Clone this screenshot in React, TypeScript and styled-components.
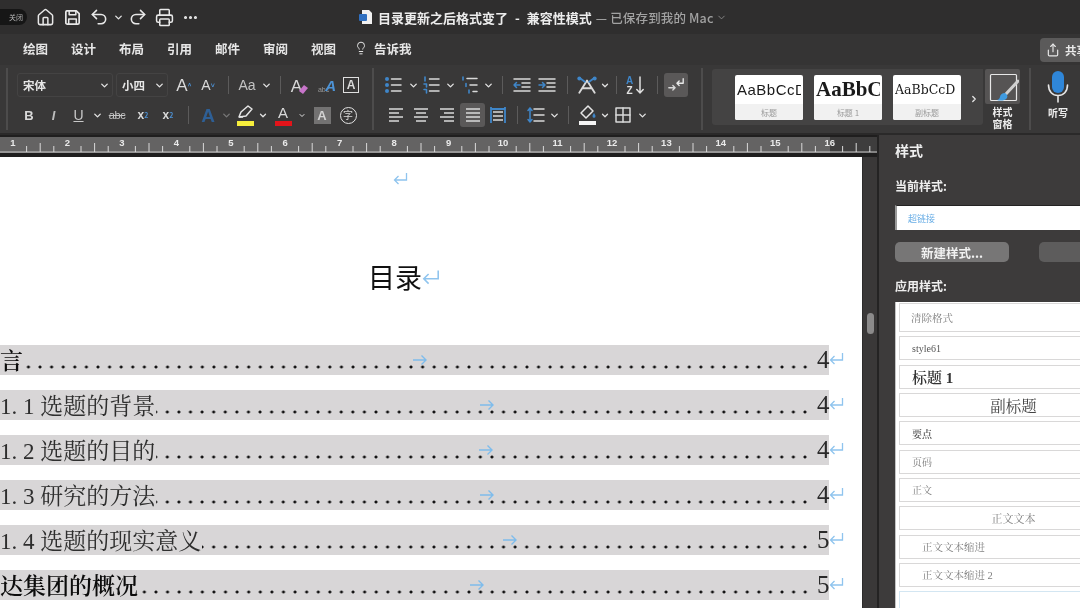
import React from "react";
import styled, { createGlobalStyle } from "styled-components";
import { House, Undo2, Redo2, Printer, Ellipsis, ChevronDown, ChevronRight, Lightbulb, Share } from "lucide-react";

const UI = `"Noto Sans CJK SC","Liberation Sans",sans-serif`;
const SERIF = `"Liberation Serif","Noto Serif CJK SC","Noto Sans CJK SC",serif`;

const Global = createGlobalStyle`
  html, body { margin: 0; padding: 0; background: #383737; overflow: hidden; }
  #root { width: 1080px; height: 608px; overflow: hidden; }
  * { box-sizing: border-box; }
`;

const Screen = styled.div`
  width: 1080px; height: 608px; display: flex; flex-direction: column; overflow: hidden;
  font-family: ${UI}; color: #e4e4e4; background: #383737; filter: blur(0.45px);
`;

/* ---------- title bar ---------- */
const TitleBar = styled.header`
  height: 34px; flex: none; display: flex; align-items: center; background: #2f2e2e; position: relative;
`;
const CloseChip = styled.div`
  width: 27px; height: 16px; margin-right: 8px; border-radius: 0 8px 8px 0; background: #161616; color: #b5b5b5;
  font-size: 7px; display: flex; align-items: center; justify-content: flex-end; padding-right: 4px; flex: none;
`;
const QuickCell = styled.div<{ $w: number }>`
  width: ${p => p.$w}px; flex: none; display: flex; justify-content: center; align-items: center; color: #e8e8e8;
`;
const DocTitle = styled.div`
  position: absolute; left: 358px; top: 0; height: 34px; display: flex; align-items: center; white-space: nowrap;
  font-size: 13px; font-weight: 700; color: #ececec;
`;
const SavedText = styled.span`
  color: #a2a2a2; font-weight: 500; margin: 0 2px 0 4px; font-size: 12.5px; letter-spacing: 0.15px;
`;
const Sep = styled.span`
  margin: 0 7px;
`;

/* ---------- tabs ---------- */
const TabBar = styled.nav`
  height: 31px; flex: none; display: flex; align-items: center; background: #353434; padding: 0 0 3px 23px;
`;
const Tab = styled.span`
  width: 48px; flex: none; font-size: 12.5px; font-weight: 700; color: #e6e6e6;
`;
const TellMe = styled.div`
  display: flex; align-items: center; gap: 6px; font-size: 12.5px; font-weight: 700; color: #e6e6e6; margin-left: -5px;
`;
const ShareButton = styled.div`
  margin-left: auto; width: 40px; height: 24px; margin-top: 3px; border-radius: 4px 0 0 4px; background: #5b5a5a; color: #e8e8e8;
  display: flex; align-items: center; gap: 5px; padding-left: 6px; font-size: 11.5px; font-weight: 700; overflow: hidden; white-space: nowrap;
  svg { flex: none; }
`;

/* ---------- ribbon ---------- */
const Ribbon = styled.section`
  height: 70px; flex: none; display: flex; align-items: flex-start; background: #393838; padding-left: 6px; border-bottom: 2px solid #2a2929;
`;
const GroupRule = styled.div<{ $l: number }>`
  width: 2px; height: 62px; margin: 3px 0 0 ${p => p.$l}px; background: #4d4c4c; flex: none;
`;
const ToolGroup = styled.div<{ $l: number; $w: number }>`
  width: ${p => p.$w}px; margin: 8px 0 0 ${p => p.$l}px; display: flex; flex-direction: column; gap: 6px; flex: none;
`;
const ToolRow = styled.div`
  height: 24px; display: flex; align-items: center;
`;
const Select = styled.div<{ $w: number; $mr?: number }>`
  width: ${p => p.$w}px; height: 24px; margin-right: ${p => p.$mr ?? 0}px; flex: none; border: 1px solid #444343; border-radius: 3px;
  display: flex; align-items: center; justify-content: space-between; padding: 0 2px 0 5px; font-size: 11.5px; font-weight: 700; color: #e6e6e6;
`;
const Cell = styled.div<{ $w: number; $on?: boolean; $tone?: string }>`
  width: ${p => p.$w}px; height: 24px; flex: none; display: flex; align-items: center; justify-content: center; position: relative;
  color: ${p => p.$tone ?? "#d9d9d9"}; border-radius: 3px; background: ${p => (p.$on ? "#5a5858" : "transparent")};
`;
const Divider = styled.div<{ $w: number }>`
  width: ${p => p.$w}px; height: 18px; flex: none; display: flex; justify-content: center;
  &::after { content: ""; width: 1px; height: 100%; background: #5c5b5b; }
`;
const Letter = styled.span<{ $s?: number; $b?: boolean; $i?: boolean; $u?: boolean; $c?: string; $f?: string }>`
  font-family: ${p => p.$f ?? `"Liberation Sans",sans-serif`}; font-size: ${p => p.$s ?? 14}px; line-height: 1;
  font-weight: ${p => (p.$b ? 700 : 400)}; font-style: ${p => (p.$i ? "italic" : "normal")};
  text-decoration: ${p => (p.$u ? "underline" : "none")}; color: ${p => p.$c ?? "inherit"};
`;
const TinyMark = styled.sub<{ $up?: boolean }>`
  font-size: 7px; color: #4d8fd0; font-weight: 700; vertical-align: ${p => (p.$up ? "super" : "sub")}; line-height: 0;
`;
const ColorBar = styled.span<{ $c: string }>`
  position: absolute; left: 50%; bottom: 1px; width: 17px; height: 5px; margin-left: -8.5px; background: ${p => p.$c};
`;
const GrayTile = styled.span`
  width: 17px; height: 17px; background: #737272; color: #d2d2d2; display: flex; align-items: center; justify-content: center;
  font-family: "Liberation Sans",sans-serif; font-size: 13px; font-weight: 700;
`;
const CharCircle = styled.span`
  width: 17px; height: 17px; border-radius: 50%; border: 1.5px solid #e4e4e4; display: flex; align-items: center; justify-content: center; font-size: 10px; line-height: 1;
`;
const BoxedA = styled.span`
  width: 16px; height: 16px; border: 1.5px solid #e0e0e0; display: flex; align-items: center; justify-content: center;
  font-family: "Liberation Sans",sans-serif; font-size: 12px; font-weight: 700;
`;
const Struck = styled.span`
  font-family: "Liberation Sans",sans-serif; font-size: 11px; text-decoration: line-through; letter-spacing: -0.4px; color: #c4c4c4;
`;

const Gallery = styled.div`
  width: 271px; height: 56px; margin: 4px 0 0 9px; flex: none; background: #444343; border-radius: 3px 0 3px 3px;
  display: flex; align-items: flex-start; padding: 6px 0 0 23px; gap: 11px; position: relative;
`;
const StyleCard = styled.div`
  width: 68px; height: 45px; flex: none; background: #fff; border-radius: 2px; display: flex; flex-direction: column; overflow: hidden;
`;
const CardSample = styled.div<{ $f: string; $s: number; $b?: boolean; $ls?: number }>`
  height: 29px; margin: 0 2px; display: flex; align-items: center; overflow: hidden; white-space: nowrap;
  font-family: ${p => p.$f}; font-size: ${p => p.$s}px; font-weight: ${p => (p.$b ? 700 : 400)}; color: #1a1a1a; letter-spacing: ${p => p.$ls ?? 0}px;
`;
const CardLabel = styled.div`
  flex: 1; background: #f1f1f1; color: #9a9a9a; font-size: 8px; display: flex; align-items: center; justify-content: center;
`;
const GalleryNext = styled.div`
  position: absolute; left: 257px; top: 16px; color: #e6e6e6;
`;
const PaneButton = styled.div`
  width: 35px; margin: 4px 0 0 2px; flex: none; display: flex; flex-direction: column; align-items: center;
`;
const PaneIcon = styled.div`
  width: 35px; height: 35px; background: #565454; border-radius: 2px; display: flex; align-items: center; justify-content: center;
`;
const RibbonCaption = styled.div`
  font-size: 10px; line-height: 12px; font-weight: 700; text-align: center; color: #ececec; margin-top: 2px;
`;
const Dictate = styled.div`
  width: 36px; margin: 5px 0 0 9px; flex: none; display: flex; flex-direction: column; align-items: center; gap: 2px;
`;

/* ---------- body ---------- */
const Body = styled.main`
  flex: 1; display: flex; min-height: 0;
`;
const Left = styled.div`
  width: 877px; flex: none; display: flex; flex-direction: column;
`;
const RulerBar = styled.div`
  height: 22px; flex: none; background: #1f1e1e; line-height: 0;
`;
const Workspace = styled.div`
  flex: 1; display: flex; min-height: 0;
`;
const Page = styled.div`
  width: 862px; flex: none; background: #fff; display: flex; flex-direction: column; align-items: center; padding-top: 13px; overflow: hidden;
`;
const Gutter = styled.div`
  flex: 1; background: #3a3838; display: flex; flex-direction: column; align-items: center; padding-top: 156px; border-left: 1px solid #2c2b2b;
`;
const Thumb = styled.div`
  width: 7px; height: 21px; border-radius: 3.5px; background: #8b8a8a;
`;
const TopMark = styled.div`
  height: 16px; margin-right: 62px; display: flex; align-items: center;
`;
const PageTitle = styled.h1`
  margin: 76px 54px 0 0; height: 30px; display: flex; align-items: center; font-family: "Noto Sans CJK SC",sans-serif; font-weight: 400; font-size: 27px; line-height: 30px; color: #111;
`;
const Toc = styled.div`
  width: 862px; margin-top: 53px; display: flex; flex-direction: column; gap: 15px;
`;
const TocRow = styled.div<{ $b?: boolean }>`
  width: 829px; height: 30px; flex: none; background: #d8d6d7; position: relative; display: flex; align-items: stretch; white-space: pre;
  font-family: ${SERIF}; font-size: 23px; line-height: 33px; color: ${p => (p.$b ? "#0c0c0c" : "#2e2e2e")}; font-weight: ${p => (p.$b ? 600 : 400)};
`;
const Leader = styled.span`
  flex: 1; margin: 0 6px 0 1px;
  background-image: radial-gradient(circle at 5.8px 22px, #111 1.2px, transparent 1.8px);
  background-size: 11.6px 30px; background-position: right top; background-repeat: repeat-x;
`;
const PageNo = styled.span`
  font-family: "Liberation Serif",serif; font-size: 25px; line-height: 30px; width: 12px; font-weight: 400; color: #2a2a2a;
`;
const RowArrow = styled.span<{ $x: number }>`
  position: absolute; left: ${p => p.$x}px; top: 8px; line-height: 0;
`;
const RowReturn = styled.span`
  position: absolute; left: 100%; top: 6px; line-height: 0;
`;

/* ---------- styles panel ---------- */
const Panel = styled.aside`
  flex: 1; min-width: 0; background: #3d3b3b; border-left: 2px solid #242323; padding: 5px 0 0 16px; overflow: hidden;
`;
const PanelTitle = styled.div`
  font-size: 14px; line-height: 20px; font-weight: 700; color: #eee;
`;
const PanelLabel = styled.div<{ $t: number }>`
  font-size: 12px; line-height: 16px; font-weight: 700; color: #eee; margin-top: ${p => p.$t}px;
`;
const CurrentStyle = styled.div`
  width: 240px; height: 25px; margin-top: 11px; background: #fff; border-left: 2px solid #9a9a9a; border-top: 1px solid #242323;
  display: flex; align-items: center; padding-left: 11px; font-size: 9px; color: #6aaee6;
`;
const PanelButtons = styled.div`
  display: flex; gap: 30px; margin-top: 12px;
`;
const PanelButton = styled.div<{ $w: number; $dim?: boolean }>`
  width: ${p => p.$w}px; height: 20px; flex: none; border-radius: 5px; background: ${p => (p.$dim ? "#5d5c5c" : "#777676")};
  display: flex; align-items: center; justify-content: center; font-size: 12.5px; font-weight: 700; color: #f0f0f0;
`;
const StyleList = styled.div`
  width: 260px; margin-top: 8px; background: #fff; padding: 1px 0 0 3px; display: flex; flex-direction: column; gap: 4.33px; height: 320px; border-left: 1px solid #c4c4c4;
`;
const StyleItem = styled.div<{ $h?: number; $pad?: number; $c?: boolean; $s?: number; $col?: string; $b?: boolean; $blue?: boolean }>`
  width: 228px; height: ${p => p.$h ?? 24}px; flex: none; display: flex; align-items: center;
  justify-content: ${p => (p.$c ? "center" : "flex-start")}; padding-left: ${p => (p.$c ? 0 : p.$pad ?? 11)}px;
  border: 1.5px solid ${p => (p.$blue ? "#d3e6f2" : "#d9d8d8")}; border-right: none; background: #fff;
  font-family: ${SERIF}; font-size: ${p => p.$s ?? 10}px; color: ${p => p.$col ?? "#808080"}; font-weight: ${p => (p.$b ? 600 : 400)}; white-space: nowrap;
`;

/* ---------- icons ---------- */
const Ico: React.FC<{ s?: number; children: React.ReactNode }> = ({ s = 20, children }) => (
  <svg width={s} height={s} viewBox="0 0 20 20" fill="none" stroke="currentColor" strokeWidth={1.5} strokeLinecap="round" strokeLinejoin="round">{children}</svg>
);
const Chev: React.FC<{ c?: string }> = ({ c }) => <ChevronDown size={11} strokeWidth={3} color={c ?? "#e2e2e2"} />;
const BLUE = "#3f86c9";

const SaveIcon = () => (
  <Ico s={19}>
    <path d="M4 3h10l3 3v9.500a1.500 1.500 0 0 1-1.500 1.500h-11A1.500 1.500 0 0 1 3 15.500V4.500A1.500 1.500 0 0 1 4 3z" strokeWidth={1.8} />
    <path d="M6.500 3.500v3.500h7V3.500M6 17v-5.500h8V17" strokeWidth={1.6} />
  </Ico>
);
const BulletsIcon = () => (
  <Ico><g fill={BLUE} stroke="none"><circle cx="3" cy="4" r="2" /><circle cx="3" cy="10" r="2" /><circle cx="3" cy="16" r="2" /></g><path d="M7.500 4H17M7.500 10H17M7.500 16H17" /></Ico>
);
const NumbersIcon = () => (
  <Ico><g stroke={BLUE} strokeWidth={1.6}><path d="M3 2v4M2 9h2.500v3M2 14.500h2.500V18" /></g><path d="M7.500 4H17M7.500 10H17M7.500 16H17" /></Ico>
);
const MultiIcon = () => (
  <Ico><g stroke={BLUE} strokeWidth={1.6}><path d="M3 2v3M6 8.500v3M9 15v3" /></g><path d="M7 3.500h10M10 10h7M13 16.500h4" /></Ico>
);
const IndentIcon: React.FC<{ dir: 1 | -1 }> = ({ dir }) => (
  <Ico>
    <path d="M2 4h16M10 8h8M10 12h8M2 16h16" />
    <path d={dir < 0 ? "M8 10H2M4.500 7.500 2 10l2.500 2.500" : "M2 10h6M5.500 7.500 8 10l-2.500 2.500"} stroke={BLUE} />
  </Ico>
);
const AsianIcon = () => (
  <Ico s={22}>
    <path d="M3 17 10 6l7 11M6 13h8" strokeWidth={1.7} />
    <path d="M4 4l4 3M16 4l-4 3" stroke={BLUE} strokeWidth={1.7} />
    <g fill={BLUE} stroke="none"><circle cx="3" cy="4" r="1.800" /><circle cx="17" cy="4" r="1.800" /></g>
  </Ico>
);
const SortIcon = () => (
  <svg width="22" height="22" viewBox="0 0 22 22" fontFamily="Liberation Sans, sans-serif" fontWeight="700" fontSize="10">
    <text x="1" y="10" fill={BLUE}>A</text>
    <text x="1.500" y="20" fill="#e0e0e0">Z</text>
    <path d="M15 3v16M11.800 15.500 15 19l3.200-3.500" fill="none" stroke="#e0e0e0" strokeWidth="1.500" strokeLinecap="round" />
  </svg>
);
const ParaIcon = () => (
  <Ico s={18}>
    <path d="M2 13h7M6.500 10.500 9 13l-2.500 2.500" stroke="#d8d8d8" />
    <path d="M18 3v5h-7M13.500 5.500 11 8l2.500 2.500" stroke="#e8e8e8" />
  </Ico>
);
const AlignIcon: React.FC<{ k: "l" | "c" | "r" | "j" }> = ({ k }) => {
  const m: Record<string, string> = {
    l: "M3 4h14M3 8h10M3 12h14M3 16h10",
    c: "M3 4h14M5 8h10M3 12h14M5 16h10",
    r: "M3 4h14M7 8h10M3 12h14M7 16h10",
    j: "M3 4h14M3 8h14M3 12h14M3 16h14",
  };
  return <Ico><path d={m[k]} strokeLinecap="butt" strokeWidth={1.7} /></Ico>;
};
const DistIcon = () => (
  <Ico>
    <path d="M5 7h10M5 11h10M5 15h10" strokeWidth={1.7} strokeLinecap="butt" />
    <path d="M3 2v16M17 2v16M3 4h14" stroke={BLUE} strokeWidth={1.8} strokeLinecap="butt" />
  </Ico>
);
const LineSpaceIcon = () => (
  <Ico>
    <path d="M8 4h10M8 10h10M8 16h10" />
    <path d="M4 3v14M2 5.500 4 3l2 2.500M2 14.500 4 17l2-2.500" stroke={BLUE} />
  </Ico>
);
const FillIcon = () => (
  <svg width="20" height="22" viewBox="0 0 20 22" fill="none" stroke="#e6e6e6" strokeWidth="1.500" strokeLinejoin="round">
    <path d="M10 2 3 9l5 5 7-7z" />
    <path d="M16 9c1 1.600 1.500 2.400 1.500 3.200a1.500 1.500 0 0 1-3 0c0-.8.500-1.600 1.500-3.200z" fill={BLUE} stroke="none" />
    <rect x="1" y="17" width="17" height="4" fill="#f4f4f4" stroke="none" />
  </svg>
);
const BorderIcon = () => (
  <Ico><rect x="3" y="3" width="14" height="14" /><path d="M10 3v14M3 10h14" /></Ico>
);
const EraseMark = styled.svg`
  margin: 8px 0 0 -4px;
`;
const IconPair = styled.span`
  display: inline-flex; align-items: flex-end; line-height: 1;
`;
const EraseIcon = () => (
  <IconPair>
    <Letter $s={17} $c="#d8d8d8">A</Letter>
    <EraseMark width="11" height="11" viewBox="0 0 11 11">
      <path d="M6 1l4 3-5 6-4-3z" fill="#c774c9" />
    </EraseMark>
  </IconPair>
);
const AbcA = styled(Letter)`
  margin-left: -4px;
`;
const AbcIcon = () => (
  <IconPair>
    <Letter $s={7} $c="#9a9a9a">abc</Letter>
    <AbcA $s={15} $i $b $c="#4d93d6">A</AbcA>
  </IconPair>
);
const StrokeA = styled.span`
  font-family: "Liberation Sans",sans-serif; font-weight: 700; font-size: 19px; line-height: 1; color: #2e5f95;
`;
const RaisedLetter = styled(Letter)`
  margin-top: -5px;
`;
const HighlightSvg = styled.svg`
  margin-top: -6px;
`;
const HighlightIcon = () => (
  <HighlightSvg width="20" height="14" viewBox="0 0 20 14" fill="none" stroke="#e6e6e6" strokeWidth="1.500" strokeLinejoin="round">
    <path d="M4 12 6 7l7-6 4 3-6 7z" /><path d="M4 12h4" />
  </HighlightSvg>
);
const BrushIcon = () => (
  <svg width="33" height="33" viewBox="0 0 33 33" fill="none">
    <rect x="4.500" y="4.500" width="26" height="26" rx="1" stroke="#e8e8e8" strokeWidth="1.200" />
    <path d="M32 11 19 25" stroke="#cfcfcf" strokeWidth="3" strokeLinecap="round" />
    <path d="M19 23c-3 0-5 2-5 4-.3 2-2 3-3 3 3 1 8 1 10-2 1-2 0-4-2-5z" fill="#3f9be0" />
  </svg>
);
const MicIcon = () => (
  <svg width="24" height="33" viewBox="0 0 24 33" fill="none">
    <rect x="6" y="1" width="12" height="22" rx="6" fill="#2f86d8" />
    <path d="M2.500 15c0 6.500 4 10.500 9.500 10.500S21.500 21.500 21.500 15M12 25.500V32" stroke="#e6e6e6" strokeWidth="1.600" strokeLinecap="round" />
  </svg>
);
const DocGlyphSvg = styled.svg`
  margin-right: 5px;
`;
const DocGlyph = () => (
  <DocGlyphSvg width="15" height="16" viewBox="0 0 15 16">
    <path d="M4 1h7l3 3v11H4z" fill="#f1f1f1" />
    <rect x="1" y="5" width="8" height="7" rx="1" fill="#2f6fc0" />
  </DocGlyphSvg>
);
const Return: React.FC<{ c?: string; s?: number }> = ({ c = "#8fc4ee", s = 15 }) => (
  <svg width={s} height={s} viewBox="0 0 15 15" fill="none" stroke={c} strokeWidth="1.300"><path d="M13.500 2v7H1.500M5.500 5 1.500 9l4 4" /></svg>
);
const TabArrow = () => (
  <svg width="16" height="14" viewBox="0 0 16 14" fill="none" stroke="#7dbcec" strokeWidth="1.400"><path d="M1 7h13M9.500 2.500 14 7l-4.500 4.500" /></svg>
);

const rulerNums = Array.from({ length: 16 }, (_, i) => i + 1);
const RulerArt = () => {
  const ticks: React.ReactNode[] = [];
  for (let i = -1; i < 66; i++) {
    const x = -0.6 + i * 13.6;
    if (x > 877) break;
    if (i % 4 === 1) continue;
    ticks.push(<line key={i} x1={x} x2={x} y1={i % 2 === 1 ? 8 : 11} y2={17} stroke="#d9d9d9" strokeWidth="1" />);
  }
  return (
    <svg width="877" height="22" viewBox="0 0 877 22" fontFamily="Liberation Sans, sans-serif">
      <rect x="0" y="2" width="830" height="16" fill="#646363" />
      <rect x="830" y="2" width="47" height="16" fill="#3e3d3d" />
      <rect x="0" y="16.500" width="877" height="1" fill="#c9c9c9" />
      {ticks}
      {rulerNums.map(n => (
        <text key={n} x={13 + (n - 1) * 54.45} y="11" fontSize="9.500" fontWeight="700" fill="#eaeaea" textAnchor="middle">{n}</text>
      ))}
    </svg>
  );
};

/* ---------- data ---------- */
const tabs = ["绘图", "设计", "布局", "引用", "邮件", "审阅", "视图"];
const toc = [
  { text: "言", bold: true, page: 4, arrow: 412 },
  { text: "1. 1 选题的背景", page: 4, arrow: 479 },
  { text: "1. 2 选题的目的", page: 4, arrow: 478 },
  { text: "1. 3 研究的方法", page: 4, arrow: 479 },
  { text: "1. 4 选题的现实意义", page: 5, arrow: 502 },
  { text: "达集团的概况", bold: true, page: 5, arrow: 469 },
];

export default function App() {
  return (
    <Screen>
      <Global />
      <TitleBar>
        <CloseChip>关闭</CloseChip>
        <QuickCell $w={20}><House size={19} strokeWidth={1.9} /></QuickCell>
        <QuickCell $w={34}><SaveIcon /></QuickCell>
        <QuickCell $w={20}><Undo2 size={20} strokeWidth={1.9} /></QuickCell>
        <QuickCell $w={18}><Chev /></QuickCell>
        <QuickCell $w={22}><Redo2 size={20} strokeWidth={1.9} /></QuickCell>
        <QuickCell $w={30}><Printer size={19} strokeWidth={1.9} /></QuickCell>
        <QuickCell $w={22}><Ellipsis size={17} strokeWidth={2.4} /></QuickCell>
        <DocTitle>
          <DocGlyph />
          目录更新之后格式变了<Sep>-</Sep>兼容性模式
          <SavedText>— 已保存到我的 Mac</SavedText>
          <ChevronDown size={11} color="#8a8a8a" />
        </DocTitle>
      </TitleBar>

      <TabBar>
        {tabs.map(t => <Tab key={t}>{t}</Tab>)}
        <TellMe><Lightbulb size={14} strokeWidth={1.7} />告诉我</TellMe>
        <ShareButton><Share size={14} strokeWidth={2} />共享</ShareButton>
      </TabBar>

      <Ribbon>
        <GroupRule $l={0} />
        <ToolGroup $l={9} $w={345}>
          <ToolRow>
            <Select $w={96} $mr={3}>宋体<Chev /></Select>
            <Select $w={52} $mr={4}>小四<Chev /></Select>
            <Cell $w={24}><Letter $s={17}>A</Letter><TinyMark $up>^</TinyMark></Cell>
            <Cell $w={24}><Letter $s={14}>A</Letter><TinyMark $up>˅</TinyMark></Cell>
            <Divider $w={16} />
            <Cell $w={22}><Letter $s={14} $c="#c4c4c4">Aa</Letter></Cell>
            <Cell $w={16}><Chev /></Cell>
            <Divider $w={12} />
            <Cell $w={28}><EraseIcon /></Cell>
            <Cell $w={26}><AbcIcon /></Cell>
            <Cell $w={22}><BoxedA>A</BoxedA></Cell>
          </ToolRow>
          <ToolRow>
            <Cell $w={24}><Letter $s={13} $b>B</Letter></Cell>
            <Cell $w={25}><Letter $s={13} $b $i $c="#bdbdbd">I</Letter></Cell>
            <Cell $w={25}><Letter $s={14} $u $c="#c8c8c8">U</Letter></Cell>
            <Cell $w={12}><Chev /></Cell>
            <Cell $w={28}><Struck>abc</Struck></Cell>
            <Cell $w={24}><Letter $s={12} $b>x</Letter><TinyMark>2</TinyMark></Cell>
            <Cell $w={26}><Letter $s={12} $b>x</Letter><TinyMark $up>2</TinyMark></Cell>
            <Divider $w={15} />
            <Cell $w={24}><StrokeA>A</StrokeA></Cell>
            <Cell $w={12}><Chev c="#777" /></Cell>
            <Cell $w={26}><HighlightIcon /><ColorBar $c="#f7ee3c" /></Cell>
            <Cell $w={10}><Chev /></Cell>
            <Cell $w={30}><RaisedLetter $s={15}>A</RaisedLetter><ColorBar $c="#e3141a" /></Cell>
            <Cell $w={8}><Chev /></Cell>
            <Cell $w={32}><GrayTile>A</GrayTile></Cell>
            <Cell $w={20}><CharCircle>字</CharCircle></Cell>
          </ToolRow>
        </ToolGroup>
        <GroupRule $l={10} />
        <ToolGroup $l={10} $w={308}>
          <ToolRow>
            <Cell $w={20}><BulletsIcon /></Cell>
            <Cell $w={18}><Chev /></Cell>
            <Cell $w={20}><NumbersIcon /></Cell>
            <Cell $w={16}><Chev /></Cell>
            <Cell $w={24}><MultiIcon /></Cell>
            <Cell $w={12}><Chev /></Cell>
            <Divider $w={16} />
            <Cell $w={24}><IndentIcon dir={-1} /></Cell>
            <Cell $w={26}><IndentIcon dir={1} /></Cell>
            <Divider $w={14} />
            <Cell $w={26}><AsianIcon /></Cell>
            <Cell $w={10}><Chev /></Cell>
            <Divider $w={12} />
            <Cell $w={28}><SortIcon /></Cell>
            <Divider $w={14} />
            <Cell $w={24} $on><ParaIcon /></Cell>
          </ToolRow>
          <ToolRow>
            <Cell $w={24}><AlignIcon k="l" /></Cell>
            <Cell $w={26}><AlignIcon k="c" /></Cell>
            <Cell $w={26}><AlignIcon k="r" /></Cell>
            <Cell $w={25} $on><AlignIcon k="j" /></Cell>
            <Cell $w={26}><DistIcon /></Cell>
            <Divider $w={12} />
            <Cell $w={26}><LineSpaceIcon /></Cell>
            <Cell $w={11}><Chev /></Cell>
            <Divider $w={16} />
            <Cell $w={24}><FillIcon /></Cell>
            <Cell $w={10}><Chev /></Cell>
            <Cell $w={26}><BorderIcon /></Cell>
            <Cell $w={12}><Chev /></Cell>
          </ToolRow>
        </ToolGroup>
        <GroupRule $l={9} />
        <Gallery>
          <StyleCard><CardSample $f={`"Liberation Sans",sans-serif`} $s={15} $ls={0.5}>AaBbCcD</CardSample><CardLabel>标题</CardLabel></StyleCard>
          <StyleCard><CardSample $f={`"Liberation Serif",serif`} $s={21} $b>AaBbCc</CardSample><CardLabel>标题 1</CardLabel></StyleCard>
          <StyleCard><CardSample $f={`"DejaVu Serif",serif`} $s={12.5}>AaBbCcD</CardSample><CardLabel>副标题</CardLabel></StyleCard>
          <GalleryNext><ChevronRight size={10} strokeWidth={3} /></GalleryNext>
        </Gallery>
        <PaneButton>
          <PaneIcon><BrushIcon /></PaneIcon>
          <RibbonCaption>样式<br />窗格</RibbonCaption>
        </PaneButton>
        <GroupRule $l={9} />
        <Dictate>
          <MicIcon />
          <RibbonCaption>听写</RibbonCaption>
        </Dictate>
      </Ribbon>

      <Body>
        <Left>
          <RulerBar><RulerArt /></RulerBar>
          <Workspace>
            <Page>
              <TopMark><Return s={15} /></TopMark>
              <PageTitle>目录<Return s={18} /></PageTitle>
              <Toc>
                {toc.map(r => (
                  <TocRow key={r.text} $b={r.bold}>
                    {r.text}
                    <Leader />
                    <PageNo>{r.page}</PageNo>
                    <RowArrow $x={r.arrow}><TabArrow /></RowArrow>
                    <RowReturn><Return /></RowReturn>
                  </TocRow>
                ))}
              </Toc>
            </Page>
            <Gutter><Thumb /></Gutter>
          </Workspace>
        </Left>
        <Panel>
          <PanelTitle>样式</PanelTitle>
          <PanelLabel $t={18}>当前样式:</PanelLabel>
          <CurrentStyle>超链接</CurrentStyle>
          <PanelButtons>
            <PanelButton $w={114}>新建样式...</PanelButton>
            <PanelButton $w={114} $dim />
          </PanelButtons>
          <PanelLabel $t={16}>应用样式:</PanelLabel>
          <StyleList>
            <StyleItem $h={29} $s={10.5} $pad={11}>清除格式</StyleItem>
            <StyleItem $s={10} $col="#555" $pad={12}>style61</StyleItem>
            <StyleItem $s={15} $col="#333" $pad={12} $b>标题 1</StyleItem>
            <StyleItem $s={15.5} $col="#444" $c>副标题</StyleItem>
            <StyleItem $col="#555" $pad={12} $b>要点</StyleItem>
            <StyleItem $pad={12}>页码</StyleItem>
            <StyleItem $pad={12}>正文</StyleItem>
            <StyleItem $s={11} $c>正文文本</StyleItem>
            <StyleItem $s={10.5} $pad={22}>正文文本缩进</StyleItem>
            <StyleItem $s={10.5} $pad={22}>正文文本缩进 2</StyleItem>
            <StyleItem $blue />
          </StyleList>
        </Panel>
      </Body>
    </Screen>
  );
}
